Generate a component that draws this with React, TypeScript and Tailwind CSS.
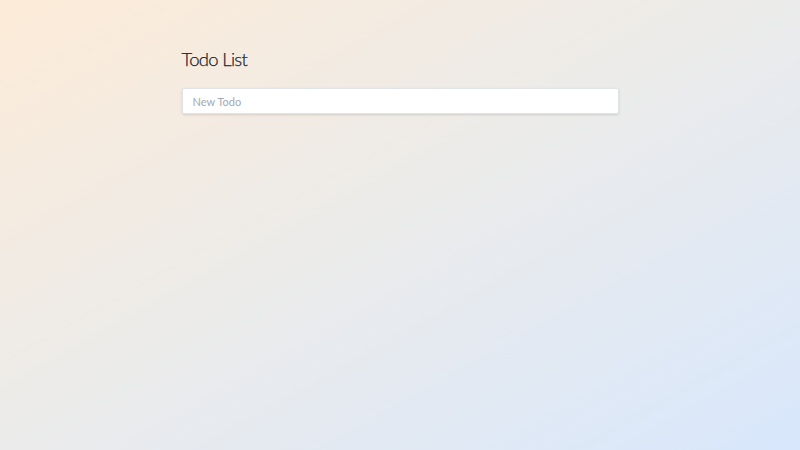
export default function App() {
  return (
    <div className="min-h-screen w-full bg-gradient-to-br from-[#fdebd8] via-[#ebebeb] to-[#d8e7fc] font-['Lato',sans-serif]">
      <div className="mx-auto w-[437px] pt-[47px]">
        <h1 className="text-[18.5px] font-light leading-[24px] tracking-[-0.7px] text-[#1e2328] [-webkit-text-stroke:0.25px_#1e2328]">
          Todo List
        </h1>
        <input
          type="text"
          placeholder="New Todo"
          className="mt-[17px] h-[26px] w-full rounded-[2px] border border-[#e0e3e7] bg-white px-[10px] text-[11px] text-[#2d3748] shadow-sm outline-none placeholder:text-[#a3a9b1]"
        />
      </div>
    </div>
  );
}
